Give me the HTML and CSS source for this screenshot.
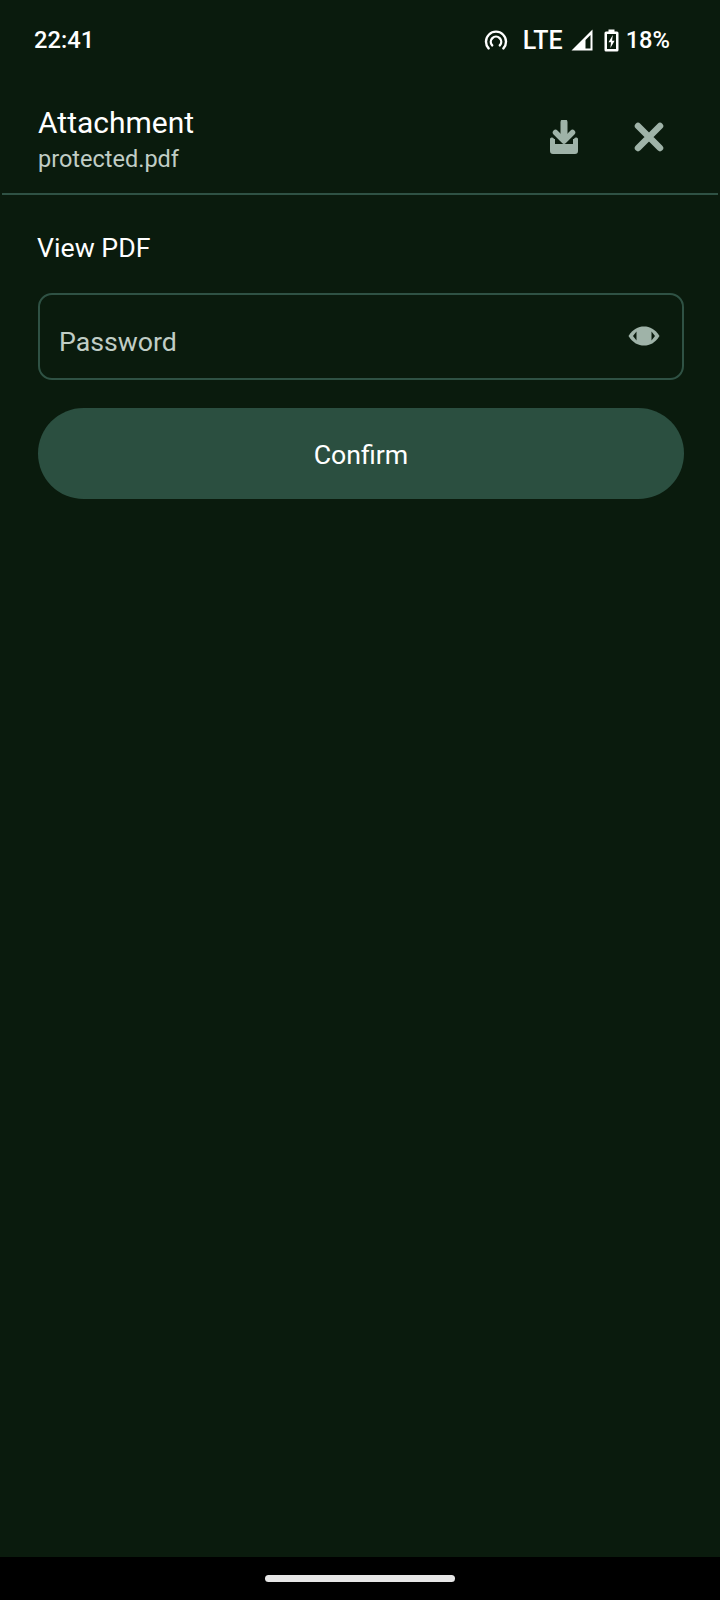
FILE: index.html
```html
<!DOCTYPE html>
<html lang="en">
<head>
    <meta charset="UTF-8">
    <meta name="viewport" content="width=device-width, initial-scale=1.0">
    <title>Attachment - protected.pdf</title>
    <link rel="stylesheet" href="styles.css">
</head>
<body>
    <div class="screen">
        <div class="status-bar">
            <div class="status-time">22:41</div>
            <div class="status-icons">
                <svg class="icon-hotspot" viewBox="0 0 24 20" width="24" height="20">
                    <path d="M4.6 18.4 A10 10 0 1 1 19.4 18.4" fill="none" stroke="#fff" stroke-width="2.4" stroke-linecap="round"/>
                    <path d="M8.2 15.4 A5.2 5.2 0 1 1 15.8 15.4" fill="none" stroke="#fff" stroke-width="2.4" stroke-linecap="round"/>
                </svg>
                <span class="status-lte">LTE</span>
                <svg class="icon-signal" viewBox="0 0 22 22" width="22" height="22">
                    <path d="M21.5 0.5 V21.5 H0.5 Z" fill="#fff"/>
                    <path d="M19.5 6 V19.5 H14.5 V11 Z" fill="#0a1b0d"/>
                </svg>
                <svg class="icon-battery" viewBox="0 0 15 23" width="15" height="23">
                    <path d="M4.5 0.5 H10.5 V2.5 H13 A1.5 1.5 0 0 1 14.5 4 V21 A1.5 1.5 0 0 1 13 22.5 H2 A1.5 1.5 0 0 1 0.5 21 V4 A1.5 1.5 0 0 1 2 2.5 H4.5 Z" fill="#fff"/>
                    <path d="M3 5 H12 V20 H3 Z" fill="#0a1b0d"/>
                    <path d="M8.8 6 L4.5 13.2 H7 L6.4 19 L10.6 11.8 H8.1 Z" fill="#fff"/>
                </svg>
                <span class="status-battery">18%</span>
            </div>
        </div>

        <div class="header">
            <div class="header-text">
                <div class="header-title">Attachment</div>
                <div class="header-file">protected.pdf</div>
            </div>
            <div class="header-actions">
                <svg class="icon-download" viewBox="0 0 28 34" width="28" height="34">
                    <path d="M14 2.5 V16" fill="none" stroke="#9fb3a8" stroke-width="7" stroke-linecap="round"/>
                    <path d="M5.5 12.5 L14 21 L22.5 12.5" fill="none" stroke="#9fb3a8" stroke-width="5.5" stroke-linecap="round" stroke-linejoin="round"/>
                    <path d="M0 20 A2 2 0 0 1 4 19 H5 V24 H23 V19 H24 A2 2 0 0 1 28 20 V31 A3 3 0 0 1 25 34 H3 A3 3 0 0 1 0 31 Z" fill="#9fb3a8"/>
                </svg>
                <svg class="icon-close" viewBox="0 0 30 30" width="30" height="30">
                    <path d="M4 4 L26 26 M26 4 L4 26" fill="none" stroke="#9fb3a8" stroke-width="6.5" stroke-linecap="round"/>
                </svg>
            </div>
        </div>

        <div class="content">
            <div class="section-label">View PDF</div>
            <div class="password-field">
                <span class="password-hint">Password</span>
                <svg class="icon-eye" viewBox="0 0 32 20" width="32" height="20">
                    <path d="M0.5 10 C5 3 10 0.5 16 0.5 C22 0.5 27 3 31.5 10 C27 17 22 19.5 16 19.5 C10 19.5 5 17 0.5 10 Z" fill="#9fb3a8"/>
                    <path d="M8.5 5.5 L5 10 L8.5 14.5 Z M23.5 5.5 L27 10 L23.5 14.5 Z" fill="#0a1b0d"/>
                </svg>
            </div>
            <div class="confirm-button">Confirm</div>
        </div>

        <div class="nav-bar">
            <div class="nav-pill"></div>
        </div>
    </div>
</body>
</html>
```

FILE: styles.css
```css
body {
    margin: 0;
    background-color: #0a1b0d;
    font-family: Roboto, "Liberation Sans", sans-serif;
    color: #fff;
}
.screen {
    display: flex;
    flex-direction: column;
    height: 1600px;
}
.status-bar {
    display: flex;
    justify-content: space-between;
    align-items: center;
    height: 24px;
    padding: 28px 50px 28px 34px;
}
.status-time {
    font-size: 23.7px;
    font-weight: 500;
}
.status-icons {
    display: flex;
    align-items: center;
    font-size: 23.7px;
    font-weight: 500;
}
.status-lte {
    margin-left: 15px;
    font-size: 25px;
}
.icon-signal {
    margin-left: 8px;
}
.icon-battery {
    margin-left: 11px;
}
.status-battery {
    margin-left: 7px;
}
.header {
    display: flex;
    justify-content: space-between;
    margin: 0 2px;
    height: 113px;
    padding-left: 36px;
    border-bottom: 2px solid #2f5244;
}
.header-text {
    padding-top: 25px;
}
.header-title {
    font-size: 30px;
    line-height: 36px;
}
.header-file {
    font-size: 23.5px;
    line-height: 36px;
    color: #c0cdc5;
}
.header-actions {
    display: flex;
    align-items: flex-start;
    gap: 56px;
    padding: 40px 54px 0 0;
}
.icon-close {
    margin-top: 2px;
}
.content {
    flex: 1;
    display: flex;
    flex-direction: column;
    padding: 0 36px 0 38px;
}
.section-label {
    margin-top: 37px;
    margin-left: -1px;
    font-size: 26.7px;
    line-height: 32px;
}
.password-field {
    display: flex;
    justify-content: space-between;
    align-items: center;
    box-sizing: border-box;
    height: 87px;
    margin-top: 29px;
    padding: 0 22px 0 19px;
    border: 2px solid #2f5244;
    border-radius: 14px;
}
.password-hint {
    padding-top: 11px;
    font-size: 26.7px;
    color: #c0cdc5;
}
.icon-eye {
    margin-bottom: 2px;
}
.confirm-button {
    display: flex;
    justify-content: center;
    align-items: center;
    box-sizing: border-box;
    height: 91px;
    margin-top: 28px;
    padding-top: 2px;
    border-radius: 46px;
    background-color: #2b4f40;
    font-size: 26.7px;
}
.nav-bar {
    display: flex;
    justify-content: center;
    height: 43px;
    background-color: #000;
}
.nav-pill {
    width: 190px;
    height: 7px;
    margin-top: 18px;
    border-radius: 4px;
    background-color: #e6e6e6;
}
```
